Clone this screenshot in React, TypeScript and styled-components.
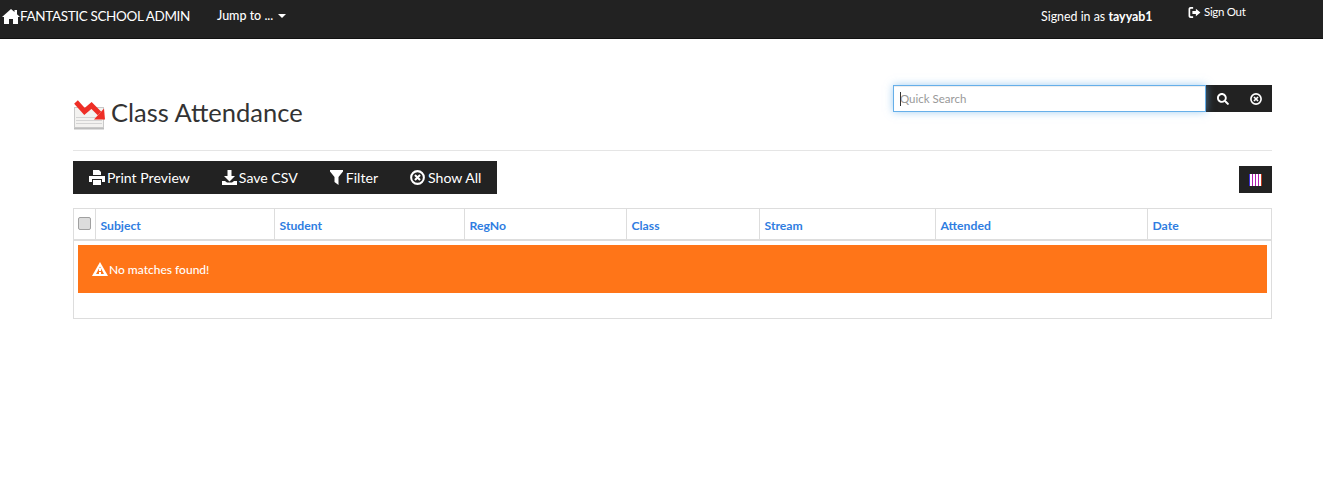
import React from 'react';
import styled, { createGlobalStyle } from 'styled-components';
import { FaSearch } from 'react-icons/fa';

const COLUMNS = [
  { label: 'Subject', width: 179 },
  { label: 'Student', width: 190 },
  { label: 'RegNo', width: 162 },
  { label: 'Class', width: 133 },
  { label: 'Stream', width: 176 },
  { label: 'Attended', width: 212 },
  { label: 'Date', width: 125 },
];

const GlobalStyle = createGlobalStyle`
  html, body {
    margin: 0;
    background: #fff;
    font-family: Lato, "Open Sans", sans-serif;
    color: #333;
  }
`;

function HomeIcon() {
  return (
    <svg width="18" height="15" viewBox="0 0 18 15" fill="#fff">
      <path d="M9 0l3.500 3V1h2.500v4.200L18 8h-2v7h-5v-5H7v5H2V8H0z" />
    </svg>
  );
}

function SignOutIcon() {
  return (
    <svg width="13" height="11" viewBox="0 0 13 12" fill="#fff">
      <path d="M5 0H2.200C1 0 0 1 0 2.200v7.600C0 11 1 12 2.200 12H5v-1.800H2.600c-.5 0-.8-.3-.8-.8V2.600c0-.5.3-.8.8-.8H5z" />
      <path d="M8 2v2.400H4.200v3.200H8V10l5-4z" />
    </svg>
  );
}

function AttendanceIcon() {
  return (
    <svg width="32" height="32" viewBox="0 0 32 32">
      <rect x="1.500" y="9.500" width="29" height="20" fill="#f3f2f0" stroke="#c9c9c9" />
      <path d="M3 19.500h26M3 22.500h26M3 25.500h26" stroke="#d4d4d4" />
      <path d="M1 30h30v1.500H1z" fill="#bdbdbd" />
      <path d="M3 4l8.500 9.500 7-6 8 8" fill="none" stroke="#ee2e26" strokeWidth="5" />
      <path d="M31 10.500l1 11H21z" fill="#ee2e26" />
    </svg>
  );
}

function ColumnsIcon() {
  return (
    <svg width="13" height="12" viewBox="0 0 13 12">
      <path d="M0 0h13v12H0z" fill="#fff" />
      <path d="M0 0h1v12H0z" fill="#3a2fd0" />
      <path d="M3 0h1v12H3zM6 0h1v12H6zM9 0h1v12H9z" fill="#b01fb0" />
      <path d="M12 0h1v12h-1z" fill="#c0381c" />
    </svg>
  );
}

function PrintIcon() {
  return (
    <svg width="16" height="15" viewBox="0 0 16 15" fill="#fff">
      <path d="M4 0h6l2 2v3H4zM0 6h16v6h-3V9H3v3H0zM4 10h8v5H4z" />
    </svg>
  );
}

function DownloadIcon() {
  return (
    <svg width="15" height="15" viewBox="0 0 15 15" fill="#fff">
      <path d="M5.500 0h4v6H13l-5.500 5.500L2 6h3.500zM0 11h3l2 1.500h5L12 11h3v4H0z" />
    </svg>
  );
}

function FilterIcon() {
  return (
    <svg width="13" height="15" viewBox="0 0 13 15" fill="#fff">
      <path d="M0 0h13v1.500L8.500 7v8l-4-3V7L0 1.500z" />
    </svg>
  );
}

function RemoveCircleIcon({ size }: { size: number }) {
  return (
    <svg width={size} height={size} viewBox="0 0 16 16" fill="none" stroke="#fff" strokeWidth="2.200">
      <circle cx="8" cy="8" r="6.800" />
      <path d="M5.300 5.300l5.400 5.400M10.700 5.300l-5.400 5.400" />
    </svg>
  );
}

function WarningIcon() {
  return (
    <svg width="16" height="14" viewBox="0 0 16 14">
      <path d="M8 0l8 14H0z" fill="#fff" />
      <path d="M8 4.500L4 12h8z" fill="#ff7518" />
      <path d="M7 6h2v3H7zM7 10h2v2H7z" fill="#fff" />
    </svg>
  );
}

export default function App() {
  return (
    <>
      <GlobalStyle />
      <Navbar>
        <Brand>
          <HomeIcon />
          FANTASTIC SCHOOL ADMIN
        </Brand>
        <JumpMenu>
          Jump to ...
          <Caret />
        </JumpMenu>
        <SignedIn>
          Signed in as <strong>tayyab1</strong>
        </SignedIn>
        <SignOut>
          <SignOutIcon />
          Sign Out
        </SignOut>
      </Navbar>
      <Container>
        <PageHeader>
          <PageTitle>
            <TitleIcon>
              <AttendanceIcon />
            </TitleIcon>
            Class Attendance
          </PageTitle>
          <SearchGroup>
            <SearchField>
              <SearchInput placeholder="Quick Search" />
              <TextCursor />
            </SearchField>
            <SearchButtons>
              <SearchButton>
                <FaSearch size={12} />
              </SearchButton>
              <SearchButton>
                <RemoveCircleIcon size={12} />
              </SearchButton>
            </SearchButtons>
          </SearchGroup>
        </PageHeader>
        <Toolbar>
          <ActionGroup>
            <ActionButton $gap={2}>
              <PrintIcon />
              Print Preview
            </ActionButton>
            <ActionButton $gap={2}>
              <DownloadIcon />
              Save CSV
            </ActionButton>
            <ActionButton $gap={3}>
              <FilterIcon />
              Filter
            </ActionButton>
            <ActionButton $gap={3}>
              <RemoveCircleIcon size={15} />
              Show All
            </ActionButton>
          </ActionGroup>
          <ColumnsButton>
            <ColumnsIcon />
          </ColumnsButton>
        </Toolbar>
        <TableFrame>
          <Table>
            <thead>
              <tr>
                <CheckCell>
                  <Check type="checkbox" />
                </CheckCell>
                {COLUMNS.map((column) => (
                  <HeadCell key={column.label} $width={column.width}>
                    {column.label}
                  </HeadCell>
                ))}
              </tr>
            </thead>
          </Table>
          <Alert>
            <WarningIcon />
            No matches found!
          </Alert>
        </TableFrame>
      </Container>
    </>
  );
}

const Navbar = styled.nav`
  display: flex;
  align-items: flex-start;
  height: 38px;
  padding-left: 2px;
  background: #222;
  border-bottom: 1px solid #121212;
  color: #fff;
`;

const Brand = styled.a`
  display: flex;
  align-items: center;
  margin-top: 6px;
  width: 215px;
  font-size: 13.500px;
  line-height: 20px;
  letter-spacing: -0.36px;
  white-space: nowrap;
`;

const JumpMenu = styled.a`
  display: flex;
  align-items: center;
  gap: 5px;
  margin-top: 6px;
  font-size: 12.500px;
  line-height: 20px;
  font-weight: 500;
`;

const Caret = styled.span`
  width: 0;
  height: 0;
  border-left: 4px solid transparent;
  border-right: 4px solid transparent;
  border-top: 4px solid #fff;
`;

const SignedIn = styled.span`
  margin-top: 7px;
  margin-left: auto;
  width: 147px;
  font-size: 12.400px;
  line-height: 20px;
  white-space: nowrap;
`;

const SignOut = styled.a`
  display: flex;
  align-items: center;
  gap: 3px;
  margin-top: 2px;
  width: 135px;
  font-size: 11.500px;
  letter-spacing: -0.3px;
  line-height: 20px;
`;

const Container = styled.main`
  width: 1199px;
  margin-left: 73px;
`;

const PageHeader = styled.header`
  display: flex;
  justify-content: space-between;
  align-items: flex-start;
  height: 111px;
  border-bottom: 1px solid #e5e5e5;
`;

const PageTitle = styled.h1`
  display: flex;
  align-items: flex-start;
  gap: 6px;
  margin: 57px 0 0;
  font-size: 25.500px;
  line-height: 32px;
  font-weight: 400;
  color: #333;
`;

const TitleIcon = styled.span`
  display: flex;
  margin-top: 2px;
`;

const SearchGroup = styled.div`
  display: flex;
  margin-top: 46px;
  height: 27px;
`;

const SearchField = styled.div`
  position: relative;
`;

const SearchInput = styled.input`
  box-sizing: border-box;
  width: 313px;
  height: 27px;
  padding: 0 6px;
  border: 1px solid #66afe9;
  outline: none;
  box-shadow: inset 0 1px 1px rgba(0, 0, 0, 0.075), 0 0 8px rgba(102, 175, 233, 0.6);
  font-family: inherit;
  font-size: 11.500px;

  &::placeholder {
    color: #999;
  }
`;

const TextCursor = styled.span`
  position: absolute;
  left: 7px;
  top: 7px;
  width: 1px;
  height: 14px;
  background: #333;
`;

const SearchButtons = styled.div`
  display: flex;
  background: #222;
`;

const SearchButton = styled.button`
  display: flex;
  align-items: center;
  justify-content: center;
  width: 33px;
  padding: 0;
  border: 0;
  background: transparent;
  color: #fff;
`;

const Toolbar = styled.div`
  display: flex;
  justify-content: space-between;
  align-items: flex-start;
  margin-top: 10px;
`;

const ActionGroup = styled.div`
  display: flex;
  height: 33px;
  padding: 0 16px;
  gap: 32px;
  background: #222;
`;

const ActionButton = styled.a<{ $gap: number }>`
  display: flex;
  align-items: center;
  gap: ${(props) => props.$gap}px;
  color: #fff;
  font-size: 14.100px;
  white-space: nowrap;
`;

const ColumnsButton = styled.button`
  display: flex;
  align-items: center;
  justify-content: center;
  width: 33px;
  height: 27px;
  margin-top: 5px;
  padding: 0;
  border: 0;
  background: #222;
`;

const TableFrame = styled.section`
  box-sizing: border-box;
  margin-top: 14px;
  height: 111px;
  border: 1px solid #ddd;
`;

const Table = styled.table`
  width: 100%;
  table-layout: fixed;
  border-collapse: collapse;
`;

const CheckCell = styled.th`
  box-sizing: border-box;
  width: 21px;
  height: 31px;
  padding: 0;
  border-bottom: 2px solid #ddd;
  vertical-align: top;
  text-align: left;
`;

const Check = styled.input`
  display: block;
  appearance: none;
  box-sizing: border-box;
  width: 13px;
  height: 13px;
  margin: 8px 0 0 4px;
  background: #dcdcdc;
  border: 1px solid #a0a0a0;
  border-radius: 2px;
`;

const HeadCell = styled.th<{ $width: number }>`
  box-sizing: border-box;
  width: ${(props) => props.$width}px;
  padding: 9px 5px 0;
  border-left: 1px solid #ddd;
  border-bottom: 2px solid #ddd;
  color: #2f7de1;
  font-size: 12.200px;
  line-height: 15px;
  font-weight: 700;
  text-align: left;
  vertical-align: top;
`;

const Alert = styled.div`
  display: flex;
  align-items: center;
  gap: 1px;
  height: 48px;
  margin: 4px 4px 0;
  padding-left: 14px;
  background: #ff7518;
  color: #fff;
  font-size: 12px;
  font-weight: 500;
`;
